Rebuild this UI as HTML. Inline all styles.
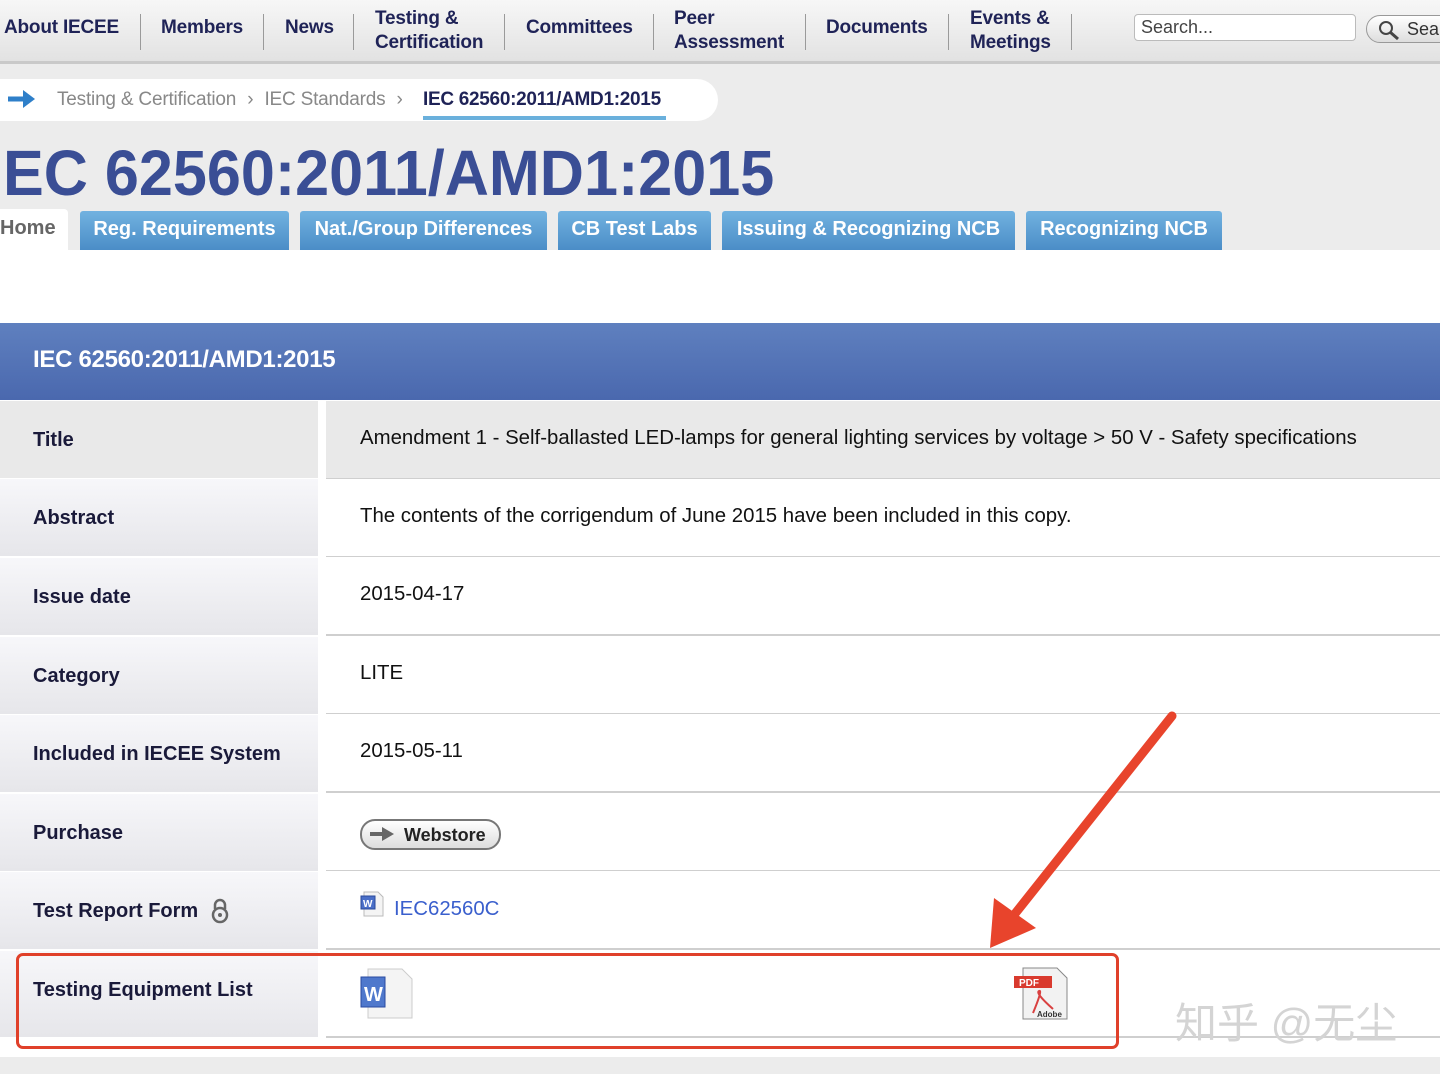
<!DOCTYPE html>
<html><head><meta charset="utf-8"><style>
*{margin:0;padding:0;box-sizing:border-box}
body{width:1440px;height:1074px;position:relative;overflow:hidden;background:#ececec;font-family:"Liberation Sans",Arial,sans-serif}
.a{position:absolute}
.nav{left:0;top:0;width:1440px;height:64px;background:linear-gradient(#f7f7f7,#e2e2e2);border-bottom:3px solid #c9c9c9}
.ni{position:absolute;color:#1f2357;font-weight:bold;font-size:19px;line-height:24px;letter-spacing:-0.2px}
.sep{position:absolute;top:14px;width:1px;height:36px;background:#9a9a9a}
.tab{position:absolute;top:211px;height:39px;background:linear-gradient(#72b2e0,#4b8dc7);color:#fff;font-weight:bold;font-size:20px;line-height:36px;text-align:center;border-radius:3px 3px 0 0}
.lab{position:absolute;left:0;width:318px;height:77px;background:linear-gradient(#f7f7fa,#e6e6ea);color:#1a1a3a;font-weight:bold;font-size:20px;padding-left:33px}
.val{position:absolute;left:326px;width:1114px;height:79px;background:#fff;border-bottom:2px solid #cfcfcf;color:#111;font-size:20.4px;padding-left:34px}
</style></head><body>
<div class="a nav">
<div class="ni" style="left:4px;top:16px">About IECEE</div><div class="sep" style="left:140px"></div>
<div class="ni" style="left:161px;top:16px">Members</div><div class="sep" style="left:263px"></div>
<div class="ni" style="left:285px;top:16px">News</div><div class="sep" style="left:353px"></div>
<div class="ni" style="left:375px;top:7px">Testing &amp;<br>Certification</div><div class="sep" style="left:504px"></div>
<div class="ni" style="left:526px;top:16px">Committees</div><div class="sep" style="left:653px"></div>
<div class="ni" style="left:674px;top:7px">Peer<br>Assessment</div><div class="sep" style="left:805px"></div>
<div class="ni" style="left:826px;top:16px">Documents</div><div class="sep" style="left:948px"></div>
<div class="ni" style="left:970px;top:7px">Events &amp;<br>Meetings</div><div class="sep" style="left:1071px"></div>
<div class="a" style="left:1134px;top:14px;width:222px;height:27px;background:#fff;border:1px solid #bbb;border-radius:4px;font-size:18px;color:#444;padding:2px 6px">Search...</div>
<div class="a" style="left:1366px;top:15px;width:90px;height:28px;background:linear-gradient(#fff,#ddd);border:1px solid #999;border-radius:14px;font-size:18px;color:#333;padding:3px 0 0 40px">Sea</div>
<svg class="a" style="left:1377px;top:19px" width="24" height="22"><circle cx="9" cy="9" r="6" fill="none" stroke="#444" stroke-width="2"/><line x1="13" y1="13" x2="21" y2="20" stroke="#444" stroke-width="3"/></svg>
</div>
<div class="a" style="left:-20px;top:79px;width:738px;height:42px;background:#fff;border-radius:21px"></div>
<svg class="a" style="left:6px;top:88px" width="32" height="22"><path d="M2 11H22" stroke="#2e7fc9" stroke-width="5"/><path d="M17 2L29 11L17 20Z" fill="#2e7fc9"/></svg>
<div class="a" style="left:57px;top:89px;font-size:19px;color:#888;letter-spacing:-0.2px">Testing &amp; Certification <span style="margin:0 6px">›</span> IEC Standards <span style="margin:0 6px">›</span></div>
<div class="a" style="left:423px;top:89px;font-size:19px;font-weight:bold;color:#1f2357;letter-spacing:-0.3px">IEC 62560:2011/AMD1:2015</div>
<div class="a" style="left:423px;top:116px;width:243px;height:4px;background:#6ab0dc"></div>
<div class="a" style="left:-14px;top:136px;font-size:64px;font-weight:bold;color:#3a4e95;transform:scaleX(0.955);transform-origin:0 0;white-space:nowrap">IEC 62560:2011/AMD1:2015</div>
<div class="a" style="left:0;top:209px;width:68px;height:41px;background:#fff;border-radius:0 4px 0 0;color:#666;font-weight:bold;font-size:20px;padding-top:8px">Home</div>
<div class="tab" style="left:80px;width:209px">Reg. Requirements</div>
<div class="tab" style="left:300px;width:247px">Nat./Group Differences</div>
<div class="tab" style="left:558px;width:153px">CB Test Labs</div>
<div class="tab" style="left:722px;width:293px">Issuing &amp; Recognizing NCB</div>
<div class="tab" style="left:1026px;width:196px">Recognizing NCB</div>
<div class="a" style="left:0;top:250px;width:1440px;height:807px;background:#fff"></div>
<div class="a" style="left:0;top:323px;width:1440px;height:77px;background:linear-gradient(#5f80bf,#4a68ae);color:#fff;font-weight:bold;font-size:24px;padding:23px 0 0 33px;letter-spacing:-0.3px">IEC 62560:2011/AMD1:2015</div>

<div class="lab" style="top:401px;padding-top:28px;background:#e9e9e9">Title</div>
<div class="val" style="top:401px;background:#e9e9e9;padding-top:26px">Amendment 1 - Self-ballasted LED-lamps for general lighting services by voltage &gt; 50 V - Safety specifications</div>
<div class="lab" style="top:479px;padding-top:28px">Abstract</div>
<div class="val" style="top:479px;padding-top:26px">The contents of the corrigendum of June 2015 have been included in this copy.</div>
<div class="lab" style="top:558px;padding-top:28px">Issue date</div>
<div class="val" style="top:557px;padding-top:26px">2015-04-17</div>
<div class="lab" style="top:637px;padding-top:28px">Category</div>
<div class="val" style="top:636px;padding-top:26px">LITE</div>
<div class="lab" style="top:715px;padding-top:28px">Included in IECEE System</div>
<div class="val" style="top:714px;padding-top:26px">2015-05-11</div>
<div class="lab" style="top:794px;padding-top:28px">Purchase</div>
<div class="val" style="top:793px"></div>
<div class="a" style="left:360px;top:819px;width:141px;height:31px;border:2px solid #777;border-radius:15px;background:linear-gradient(#fff,#ddd);font-weight:bold;font-size:18px;color:#222;padding:4px 0 0 42px">Webstore</div>
<svg class="a" style="left:368px;top:826px" width="30" height="16"><path d="M2 8H18" stroke="#666" stroke-width="4"/><path d="M14 1L26 8L14 15Z" fill="#666"/></svg>
<div class="lab" style="top:872px;padding-top:28px">Test Report Form</div>
<svg class="a" style="left:209px;top:898px" width="22" height="26"><path d="M6 11V7a5 5 0 0 1 10 0v4" fill="none" stroke="#666" stroke-width="2.5"/><circle cx="11" cy="17" r="7" fill="none" stroke="#666" stroke-width="2.5"/><circle cx="11" cy="17" r="2" fill="#666"/></svg>
<div class="val" style="top:871px;padding-top:27px;color:#3a5fcd">&nbsp;&nbsp;&nbsp;&nbsp;&nbsp;&nbsp;IEC62560C</div>
<svg class="a" style="left:360px;top:891px" width="26" height="28"><path d="M4 1H18L23 6V25H4Z" fill="#f4f4f4" stroke="#bbb"/><rect x="1" y="5" width="14" height="13" fill="#4a6fc8" stroke="#2a4a9a"/><text x="3" y="16" font-size="10" fill="#fff" font-family="Liberation Sans" font-weight="bold">W</text></svg>
<div class="lab" style="top:951px;padding-top:28px;height:86px">Testing Equipment List</div>
<div class="val" style="top:950px;height:88px"></div>
<svg class="a" style="left:360px;top:968px" width="54" height="52"><path d="M8 1H42L52 11V50H8Z" fill="#f4f4f4" stroke="#ccc"/><rect x="1" y="9" width="24" height="30" fill="#4f78cc" stroke="#2a4aa0"/><text x="4" y="33" font-size="20" fill="#fff" font-family="Liberation Sans" font-weight="bold">W</text></svg>
<svg class="a" style="left:1013px;top:967px" width="56" height="54"><path d="M10 1H44L54 11V52H10Z" fill="#f2f2f2" stroke="#888"/><rect x="1" y="9" width="38" height="12" fill="#d93a2e"/><text x="6" y="19" font-size="10" fill="#fff" font-family="Liberation Sans" font-weight="bold">PDF</text><path d="M20 46Q30 22 26 24Q22 26 40 42" fill="none" stroke="#d94040" stroke-width="2"/><text x="24" y="50" font-size="8" fill="#333" font-family="Liberation Sans" font-weight="bold">Adobe</text></svg>
<div class="a" style="left:1175px;top:990px;font-size:42px;color:#d4d4d4;font-family:'Liberation Sans','Noto Sans CJK SC',sans-serif">知乎 @无尘</div>
<div class="a" style="left:16px;top:953px;width:1103px;height:96px;border:3px solid #e0402a;border-radius:7px"></div>
<svg class="a" style="left:0;top:0" width="1440" height="1074"><path d="M1172 716L1010 920" stroke="#e8442c" stroke-width="9" stroke-linecap="round"/><path d="M990 948L994 898L1036 928Z" fill="#e8442c"/></svg>
</body></html>
